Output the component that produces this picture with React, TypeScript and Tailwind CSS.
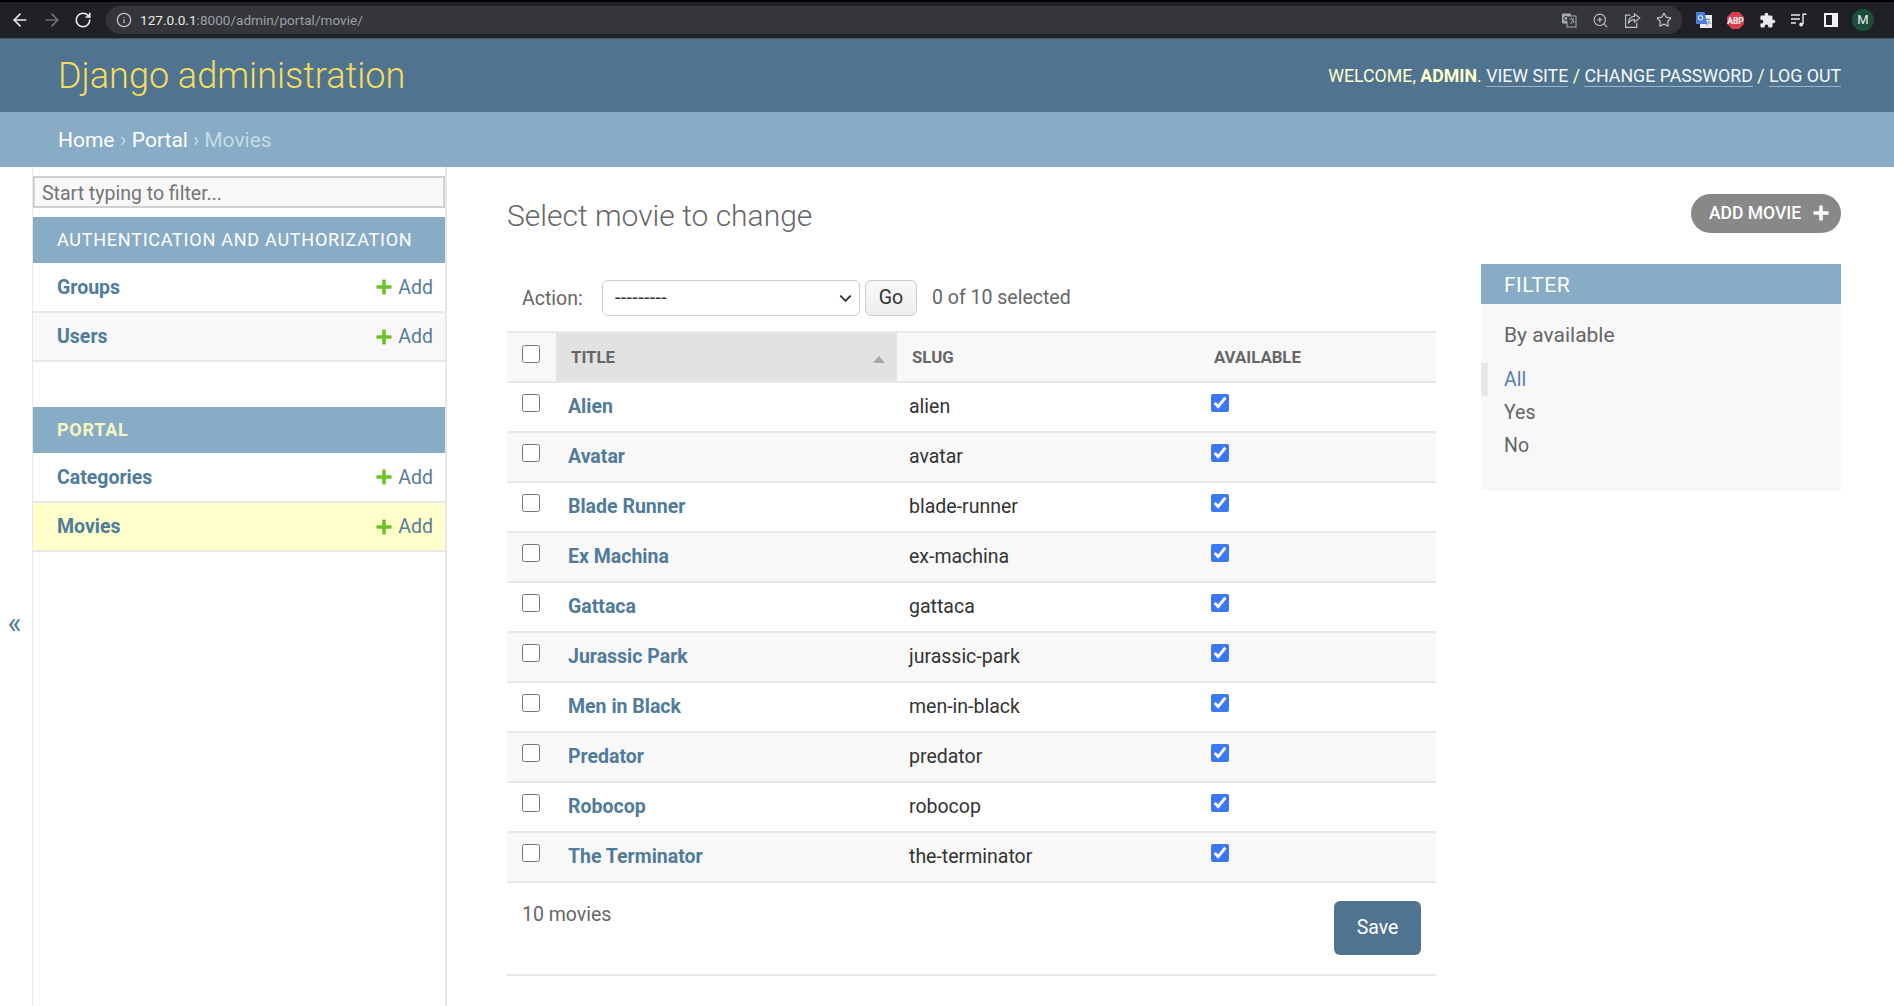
import { ArrowLeft, ArrowRight, RotateCw, Info, ZoomIn, Star, ChevronDown } from 'lucide-react'

const movies = [
  ['Alien', 'alien'],
  ['Avatar', 'avatar'],
  ['Blade Runner', 'blade-runner'],
  ['Ex Machina', 'ex-machina'],
  ['Gattaca', 'gattaca'],
  ['Jurassic Park', 'jurassic-park'],
  ['Men in Black', 'men-in-black'],
  ['Predator', 'predator'],
  ['Robocop', 'robocop'],
  ['The Terminator', 'the-terminator'],
]

function PlusIcon({ className }: { className: string }) {
  return (
    <svg viewBox="0 0 16 16" className={className} fill="currentColor">
      <path d="M6.2 1.2a.8.8 0 0 1 .8-.8h2a.8.8 0 0 1 .8.8v5h5a.8.8 0 0 1 .8.8v2a.8.8 0 0 1-.8.8h-5v5a.8.8 0 0 1-.8.8H7a.8.8 0 0 1-.8-.8v-5h-5a.8.8 0 0 1-.8-.8V7a.8.8 0 0 1 .8-.8h5z" />
    </svg>
  )
}

function BrowserBar() {
  return (
    <div className="h-[39px] bg-[#202124] border-t-2 border-t-black border-b border-b-[#4d5560] flex items-center shrink-0">
      <div className="flex items-center w-[106px] pl-[10px] gap-[12px]">
        <ArrowLeft size={20} strokeWidth={2} className="text-[#e8eaed]" />
        <ArrowRight size={20} strokeWidth={2} className="text-[#6f7174]" />
        <RotateCw size={18} strokeWidth={2.2} className="text-[#e8eaed]" />
      </div>
      <div className="w-[1576px] h-[28px] rounded-full bg-[#35363a] flex items-center pl-[10px] pr-[10px]">
        <Info size={16} className="text-[#bdc1c6]" />
        <span className="ml-[8px] text-[13.6px] text-[#9aa0a6]">
          <span className="text-[#e8eaed]">127.0.0.1</span>:8000/admin/portal/movie/
        </span>
        <div className="ml-auto flex items-center gap-[15px] text-[#bdc1c6]">
          <svg viewBox="0 0 16 16" className="w-[16px] h-[16px]">
            <rect x="1" y="1.5" width="9" height="10" rx="1" fill="#a8acb0" />
            <rect x="6" y="4" width="9" height="11" fill="#35363a" stroke="#a8acb0" />
            <circle cx="5" cy="6.5" r="2" fill="none" stroke="#35363a" strokeWidth="1.2" />
            <path d="M8.5 7h4.5M10.7 6v1M9.5 12l2.5-4 1 3" stroke="#a8acb0" fill="none" />
          </svg>
          <ZoomIn size={17} strokeWidth={1.6} />
          <svg viewBox="0 0 16 16" className="w-[17px] h-[17px]" fill="none" stroke="currentColor" strokeWidth="1.1">
            <path d="M6 3H1.5v11.5h10.5V10" />
            <path d="M9.8 1.8 14.8 5.6 9.8 9.4V7.1C7 7.1 5.2 8.2 4 10.8c.2-3.8 2.2-6.4 5.8-6.7z" />
          </svg>
          <Star size={16} strokeWidth={1.8} />
        </div>
      </div>
      <div className="flex items-center ml-[14px]">
        <svg viewBox="0 0 16 16" className="w-[16px] h-[16px]">
          <rect x="4" y="3" width="12" height="13" fill="#e8eaed" />
          <path d="M0 0h8.5l3 12H0z" fill="#4a7fe0" />
          <circle cx="4.5" cy="5.8" r="2.2" fill="none" stroke="#fff" strokeWidth="1" />
          <path d="M9.5 7.5h5M12 6.5v1M10.5 14l2.5-5 1.5 3" stroke="#777" strokeWidth=".8" fill="none" />
        </svg>
        <svg viewBox="0 0 17 17" className="ml-[15px] w-[17px] h-[17px]">
          <path d="M5 0h7l5 5v7l-5 5H5l-5-5V5z" fill="#dc3c4f" />
          <text x="8.5" y="11.5" textAnchor="middle" fontSize="8.5" fontWeight="700" fill="#fff">
            ABP
          </text>
        </svg>
        <svg viewBox="0 0 24 24" className="ml-[15px] w-[17px] h-[17px]" fill="#e8eaed">
          <path d="M20.5 11H19V7a2 2 0 0 0-2-2h-4V3.5a2.5 2.5 0 0 0-5 0V5H4a2 2 0 0 0-2 2v3.8h1.5a2.7 2.7 0 0 1 0 5.4H2V20a2 2 0 0 0 2 2h3.8v-1.5a2.7 2.7 0 0 1 5.4 0V22H17a2 2 0 0 0 2-2v-4h1.5a2.5 2.5 0 0 0 0-5z" />
        </svg>
        <svg viewBox="0 0 16 16" className="ml-[15px] w-[16px] h-[16px]" fill="none" stroke="#e8eaed" strokeWidth="1.4">
          <path d="M0 3h9M0 7h9M0 11h5" />
          <path d="M12 12V2.2h3.5" />
          <circle cx="10.2" cy="12.5" r="1.9" fill="#e8eaed" stroke="none" />
        </svg>
        <div className="ml-[17px] w-[14px] h-[14px] border-[2px] border-r-[6px] border-[#f1f3f4] bg-[#202124]" />
        <div className="ml-[14px] w-[22px] h-[22px] rounded-full bg-[#1d4d3c] text-[#e8eaed] text-[13px] flex items-center justify-center">
          M
        </div>
      </div>
    </div>
  )
}

function SidebarRow({ name, alt, current }: { name: string; alt?: boolean; current?: boolean }) {
  return (
    <div
      className={`h-[49.5px] flex items-center justify-between pl-[24px] pr-[12px] pt-[1px] border-b-2 border-[#e8e8e8] text-[19.5px] ${
        current ? 'bg-[#ffffcc]' : alt ? 'bg-[#f8f8f8]' : 'bg-white'
      }`}
    >
      <span className="font-bold text-[#517b9b]">{name}</span>
      <span className="flex items-center text-[#5b7c98]">
        <PlusIcon className="w-[16px] h-[16px] text-[#70bf2b] mr-[6px]" />
        Add
      </span>
    </div>
  )
}

function Sidebar() {
  return (
    <aside className="w-[447px] shrink-0 flex">
      <div className="w-[33px] border-r border-[#e8e8e8] flex items-center justify-center text-[#517b9b] text-[30px] pr-[3px] pt-[72px]">
        «
      </div>
      <div className="w-[414px] border-r-2 border-[#e8e8e8]">
        <div className="pt-[9px] pb-[9px]">
          <input
            placeholder="Start typing to filter..."
            className="block w-full h-[32px] border-2 border-[#d0d0d0] bg-[#f8f8f8] px-[7px] pt-[2px] text-[19.5px] text-[#666] placeholder:text-[#757575] outline-none"
          />
        </div>
        <div className="h-[46px] bg-[#88abc6] flex items-center pl-[24px] pb-[1px] text-[18px] text-white tracking-[0.75px]">
          AUTHENTICATION AND AUTHORIZATION
        </div>
        <SidebarRow name="Groups" />
        <SidebarRow name="Users" alt />
        <div className="h-[45px]" />
        <div className="h-[46px] bg-[#88abc6] flex items-center pl-[24px] pb-[1px] text-[18px] font-bold text-[#f5f7c0] tracking-[0.75px]">
          PORTAL
        </div>
        <SidebarRow name="Categories" />
        <SidebarRow name="Movies" current />
      </div>
    </aside>
  )
}

function MovieTable() {
  return (
    <table className="w-[929px] table-fixed border-collapse text-[19.5px]">
      <colgroup>
        <col className="w-[49px]" />
        <col className="w-[341px]" />
        <col className="w-[302px]" />
        <col />
      </colgroup>
      <thead>
        <tr className="h-[50px] bg-[#f8f8f8] border-y-2 border-[#e8e8e8] text-[16.8px] font-bold text-[#666]">
          <th className="pl-[15px] pb-[6px] text-left align-middle">
            <input type="checkbox" className="block w-[18px] h-[18px]" />
          </th>
          <th className="bg-[#e2e2e2] pl-[15px] pr-[12px] pt-[1px] text-left font-bold">
            <span className="flex items-center justify-between">
              TITLE
              <span className="w-0 h-0 border-x-[6.5px] border-x-transparent border-b-[7px] border-b-[#a8a8a8] mt-[4px]" />
            </span>
          </th>
          <th className="pl-[15px] pt-[1px] text-left font-bold">SLUG</th>
          <th className="pl-[15px] pt-[1px] text-left font-bold">AVAILABLE</th>
        </tr>
      </thead>
      <tbody>
        {movies.map(([title, slug], i) => (
          <tr key={slug} className={`h-[50px] border-b-2 border-[#e8e8e8] ${i % 2 === 1 ? 'bg-[#f8f8f8]' : 'bg-white'}`}>
            <td className="pl-[15px] pb-[9px] align-middle">
              <input type="checkbox" className="block w-[18px] h-[18px]" />
            </td>
            <td className="pl-[12px] font-bold text-[#517b9b] align-middle">{title}</td>
            <td className="pl-[12px] text-[#333] align-middle">{slug}</td>
            <td className="pl-[12px] pb-[9px] align-middle">
              <input type="checkbox" defaultChecked className="block w-[18px] h-[18px] accent-[#3b78f5]" />
            </td>
          </tr>
        ))}
      </tbody>
    </table>
  )
}

function FilterPanel() {
  return (
    <div className="w-[360px] h-[227px] bg-[#f8f8f8] shrink-0 text-[21px] text-[#666]">
      <div className="h-[40px] bg-[#88abc6] flex items-center pl-[23px] pt-[3px] text-[21px] tracking-[0.5px] text-white">FILTER</div>
      <div className="pt-[16px] pl-[23px] h-[59px]">By available</div>
      <ul className="text-[19.5px]">
        <li className="h-[33px] border-l-[7px] border-[#e8e8e8] pl-[16px] flex items-center text-[#5b7fae]">All</li>
        <li className="h-[33px] pl-[23px] flex items-center">Yes</li>
        <li className="h-[33px] pl-[23px] flex items-center">No</li>
      </ul>
    </div>
  )
}

export default function App() {
  return (
    <div className="h-[1006px] w-[1894px] overflow-hidden flex flex-col bg-white font-[family-name:Roboto,sans-serif]">
      <BrowserBar />
      <header className="h-[73px] shrink-0 bg-[#50748f] flex items-center justify-between pl-[58px] pr-[53px]">
        <h1 className="text-[36px] font-light text-[#f5dd5d]">Django administration</h1>
        <div className="text-[17.75px] text-[#ffffcc] pt-[2px]">
          WELCOME, <strong className="font-bold">ADMIN</strong>.{' '}
          <a className="text-[#f5f8fa] border-b border-[#9cb3c6]">VIEW SITE</a> /{' '}
          <a className="text-[#f5f8fa] border-b border-[#9cb3c6]">CHANGE PASSWORD</a> /{' '}
          <a className="text-[#f5f8fa] border-b border-[#9cb3c6]">LOG OUT</a>
        </div>
      </header>
      <div className="h-[55px] shrink-0 bg-[#88abc6] flex items-center pl-[58px] pt-[2px] text-[21px] text-[#c4dce8]">
        <a className="text-white">Home</a>
        <span className="mx-[5.5px]">›</span>
        <a className="text-white">Portal</a>
        <span className="mx-[5px]">›</span>
        Movies
      </div>
      <div className="flex-1 flex min-h-0">
        <Sidebar />
        <main className="flex-1 pl-[60px] pr-[53px]">
          <div className="flex items-start justify-between pt-[27px] h-[97px]">
            <h2 className="text-[30px] font-light text-[#666] leading-[44px]">Select movie to change</h2>
            <a className="h-[39px] w-[150px] rounded-full bg-[#888888] text-white text-[17.5px] font-medium flex items-center pl-[18px] gap-[12px]">
              ADD MOVIE
              <PlusIcon className="w-[16px] h-[16px] mb-[2px]" />
            </a>
          </div>
          <div className="flex justify-between">
            <div className="w-[929px]">
              <div className="h-[67px] pt-[16px] flex items-start text-[19.5px] text-[#666]">
                <label className="ml-[15px] w-[80px] leading-[38px]">Action:</label>
                <div className="relative">
                  <select className="block appearance-none w-[258px] h-[36px] rounded-[6px] border border-[#cccccc] bg-white px-[12px] tracking-[0.4px] text-[#333] text-[19.5px]">
                    <option>---------</option>
                  </select>
                  <ChevronDown size={19} strokeWidth={2.4} className="absolute right-[5px] top-[9px] text-[#333]" />
                </div>
                <button className="ml-[5px] w-[52px] h-[36px] rounded-[6px] border border-[#cccccc] bg-gradient-to-b from-[#f8f8f8] to-[#eeeeee] text-[#333]">
                  Go
                </button>
                <span className="ml-[15px] leading-[36px]">0 of 10 selected</span>
              </div>
              <MovieTable />
              <div className="h-[93px] border-b-2 border-[#e8e8e8] flex justify-between pl-[15px] pr-[15px] pt-[18px] text-[19.5px] text-[#666]">
                <span className="leading-[27px]">10 movies</span>
                <button className="w-[87px] h-[54px] rounded-[6px] bg-[#50748f] text-white text-[19.5px]">Save</button>
              </div>
            </div>
            <FilterPanel />
          </div>
        </main>
      </div>
    </div>
  )
}
